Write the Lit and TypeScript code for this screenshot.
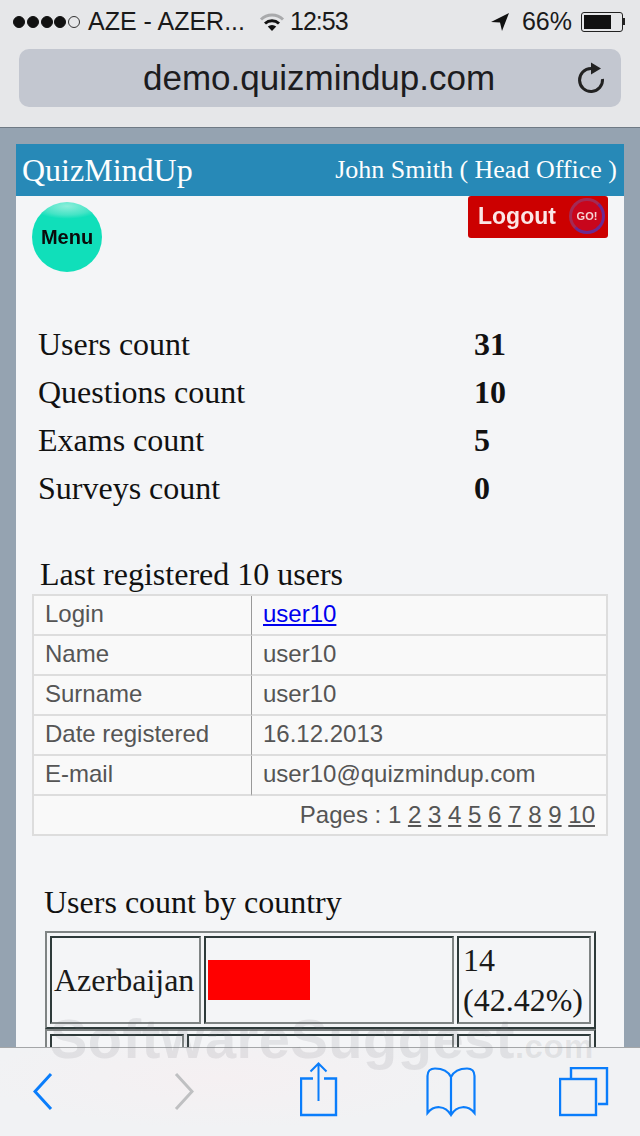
import { LitElement, html, css, svg } from 'lit';
import { customElement } from 'lit/decorators.js';

const stats = [
  ['Users count', '31'],
  ['Questions count', '10'],
  ['Exams count', '5'],
  ['Surveys count', '0'],
];

const users = [
  ['Login', 'user10'],
  ['Name', 'user10'],
  ['Surname', 'user10'],
  ['Date registered', '16.12.2013'],
  ['E-mail', 'user10@quizmindup.com'],
];

const pages = ['2', '3', '4', '5', '6', '7', '8', '9', '10'];

const wifi = svg`<svg width="26" height="20" viewBox="0 0 26 20">
  <path d="M2 7.5 A16 16 0 0 1 24 7.5" fill="none" stroke="#a9aaac" stroke-width="3"/>
  <path d="M6 11.5 A10.5 10.5 0 0 1 20 11.5" fill="none" stroke="#111" stroke-width="3"/>
  <path d="M13 19 L8.8 14.6 A6 6 0 0 1 17.2 14.6 Z" fill="#111"/>
</svg>`;

const reload = svg`<svg width="30" height="32" viewBox="0 0 30 32">
  <path d="M25.5 17 A11.5 11.5 0 1 1 14 6.5" fill="none" stroke="#222" stroke-width="3"/>
  <path d="M14 0.5 L24 6.5 L14 12.5 Z" fill="#222"/>
</svg>`;

@customElement('app-root')
export class AppRoot extends LitElement {
  static styles = css`
    :host {
      display: block;
      position: relative;
      width: 640px;
      height: 1136px;
      overflow: hidden;
      background: #95a3b1;
      font-family: 'Liberation Serif', serif;
      color: #111;
    }
    .chrome {
      height: 127px;
      background: #e6e7e9;
      border-bottom: 1px solid #6f7a85;
      font-family: 'Liberation Sans', sans-serif;
    }
    .status {
      height: 49px;
      display: flex;
      align-items: center;
      font-size: 25px;
      color: #1a1a1a;
      padding: 0 15px 6px 13px;
      box-sizing: border-box;
    }
    .dots {
      display: flex;
      gap: 1.75px;
      margin-right: 8px;
    }
    .dot {
      width: 12px;
      height: 12px;
      border-radius: 50%;
      background: #111;
      border: 1px solid #111;
      box-sizing: border-box;
    }
    .dot.off {
      background: transparent;
      border-color: #333;
    }
    .carrier {
      width: 171px;
    }
    .time {
      margin-left: 5px;
      font-weight: 500;
      letter-spacing: -1px;
    }
    .right {
      margin-left: auto;
      display: flex;
      align-items: center;
    }
    .pct {
      margin: 0 9px 0 12px;
    }
    .battery {
      width: 44px;
      height: 20px;
      display: flex;
    }
    .battery-body {
      width: 42px;
      height: 20px;
      border: 1px solid #222;
      border-radius: 3px;
      padding: 2px;
      box-sizing: border-box;
    }
    .battery-fill {
      width: 27px;
      height: 14px;
      background: #111;
    }
    .battery-tip {
      width: 2px;
      height: 7px;
      margin-top: 6px;
      background: #222;
    }
    .address {
      margin: 0 19px;
      height: 58px;
      border-radius: 10px;
      background: #c3c7d0;
      display: flex;
      align-items: center;
      font-size: 35px;
      color: #1c1c1e;
      padding-left: 124px;
      padding-right: 14px;
    }
    .address span {
      flex: 1;
    }
    .card {
      margin: 16px 16px 0;
      height: 1000px;
      background: #f4f5f7;
    }
    .head {
      height: 52px;
      background: #2789b7;
      color: #fdfefe;
      display: flex;
      align-items: center;
      justify-content: space-between;
      padding: 0 7px 0 6px;
    }
    .brand {
      font-size: 32px;
    }
    .who {
      font-size: 26px;
    }
    .actions {
      display: flex;
      justify-content: space-between;
      align-items: flex-start;
      padding: 0 16px;
    }
    .menu {
      width: 70px;
      height: 70px;
      margin-top: 6px;
      border-radius: 50%;
      background: radial-gradient(ellipse 50% 18% at 50% 6%, #8ceeda 0%, #45e4c6 70%, transparent 100%), #10dfba;
      color: #0b0b0b;
      font: bold 20px 'Liberation Sans', sans-serif;
      display: flex;
      align-items: center;
      justify-content: center;
      filter: blur(0.6px);
    }
    .logout {
      width: 140px;
      height: 42px;
      box-sizing: border-box;
      background: #cc0000;
      border-radius: 3px;
      color: #fbe6e6;
      font: bold 23px 'Liberation Sans', sans-serif;
      display: flex;
      align-items: center;
      justify-content: space-between;
      padding: 0 3px 2px 10px;
      filter: blur(0.5px);
    }
    .go {
      width: 36px;
      height: 36px;
      box-sizing: border-box;
      border-radius: 50%;
      border: 3px solid #a32a55;
      border-right-color: #6b2a90;
      border-bottom-color: #6b2a90;
      background: #c8061c;
      color: #f6d5d5;
      font-size: 11px;
      display: flex;
      align-items: center;
      justify-content: center;
    }
    .stats {
      margin: 48px 0 0 22px;
      font-size: 32px;
      display: grid;
      grid-template-columns: 436px auto;
      grid-auto-rows: 48px;
      align-items: center;
      justify-content: start;
    }
    h2 {
      margin: 0;
      font-weight: normal;
      font-size: 32px;
      line-height: 34px;
    }
    .last {
      margin: 45px 0 0 24px;
    }
    table.users {
      margin: 3px 0 0 16px;
      width: 576px;
      border-collapse: separate;
      border-spacing: 0;
      border: 2px solid #dddddd;
      table-layout: fixed;
      background: #f9f9f9;
      font: 24px 'Liberation Sans', sans-serif;
      color: #555;
    }
    .users td {
      padding: 0 0 2px 11px;
      box-sizing: border-box;
      height: 40px;
      border-bottom: 2px solid #dddddd;
    }
    .users td + td {
      border-left: 1px solid #999;
    }
    .users td:first-child {
      width: 217px;
    }
    .users tr:last-child td {
      border-bottom: 0;
      height: 38px;
    }
    .users a {
      color: #0000ee;
    }
    .users .pager {
      text-align: right;
      padding-right: 11px;
      padding-bottom: 1px;
    }
    .pager u {
      margin-left: 6.7px;
    }
    .country {
      margin: 49px 0 0 28px;
    }
    table.bars {
      width: 551px;
      table-layout: fixed;
      border-collapse: separate;
      border-spacing: 3px;
      border: 2px solid;
      border-color: #7f8484 #2e3a3a #2e3a3a #7f8484;
      font-size: 32px;
      line-height: 40px;
      margin-left: 29px;
      color: #1a1a1a;
    }
    .first {
      margin-top: 12px;
    }
    .bars td {
      border: 2px solid;
      border-color: #2e3a3a #7f8484 #7f8484 #2e3a3a;
      padding: 0 2px;
      height: 84px;
    }
    .bars .c1 {
      width: 143px;
    }
    .bars .c3 {
      width: 124px;
      padding-left: 4px;
    }
    .second .c1 {
      width: 126px;
    }
    .second td {
      height: 60px;
    }
    .fill {
      height: 40px;
      background: #ff0000;
    }
    .toolbar {
      position: absolute;
      left: 0;
      right: 0;
      bottom: 0;
      height: 89px;
      border-top: 1px solid #a4a6a8;
      background: radial-gradient(ellipse 240px 50px at 220px 30px, #f5f0f2 0%, transparent 100%), #f1f2f4;
      display: grid;
      grid-template-columns: 141px 126px 126px 133px auto;
      padding: 23px 0 0 33px;
      box-sizing: border-box;
      justify-content: start;
      align-items: start;
    }
    .toolbar svg {
      display: block;
    }
    .share {
      margin-top: -11px;
    }
    .book {
      margin-top: -4px;
    }
    .tabs {
      margin-top: -4px;
    }
    .watermark {
      position: absolute;
      left: 50px;
      top: 1006px;
      font: bold 56px 'Liberation Sans', sans-serif;
      letter-spacing: 0.5px;
      color: rgba(110, 110, 115, 0.13);
      white-space: nowrap;
    }
    .watermark small {
      font-size: 33px;
    }
  `;

  render() {
    return html`
      <div class="chrome">
        <div class="status">
          <div class="dots">
            <i class="dot"></i><i class="dot"></i><i class="dot"></i><i class="dot"></i><i class="dot off"></i>
          </div>
          <span class="carrier">AZE - AZER...</span>
          ${wifi}
          <span class="time">12:53</span>
          <div class="right">
            <svg width="20" height="20" viewBox="0 0 20 20"><path d="M19 1 L1 10 L10 10.5 L12 19 Z" fill="#111"/></svg>
            <span class="pct">66%</span>
            <div class="battery">
              <div class="battery-body"><div class="battery-fill"></div></div>
              <div class="battery-tip"></div>
            </div>
          </div>
        </div>
        <div class="address"><span>demo.quizmindup.com</span>${reload}</div>
      </div>

      <div class="card">
        <div class="head">
          <span class="brand">QuizMindUp</span>
          <span class="who">John Smith ( Head Office )</span>
        </div>
        <div class="actions">
          <div class="menu">Menu</div>
          <div class="logout">Logout<div class="go">GO!</div></div>
        </div>

        <div class="stats">
          ${stats.map(([k, v]) => html`<span>${k}</span><b>${v}</b>`)}
        </div>

        <h2 class="last">Last registered 10 users</h2>
        <table class="users">
          ${users.map(
            ([k, v], i) => html`<tr>
              <td>${k}</td>
              <td>${i === 0 ? html`<a href="#">${v}</a>` : v}</td>
            </tr>`
          )}
          <tr>
            <td class="pager" colspan="2">Pages : 1${pages.map((p) => html`<u>${p}</u>`)}</td>
          </tr>
        </table>

        <h2 class="country">Users count by country</h2>
        <table class="bars first">
          <tr>
            <td class="c1">Azerbaijan</td>
            <td><div class="fill" style="width:102px"></div></td>
            <td class="c3">14 (42.42%)</td>
          </tr>
        </table>
        <table class="bars second">
          <tr>
            <td class="c1"></td>
            <td></td>
            <td class="c3"></td>
          </tr>
        </table>
      </div>

      <div class="toolbar">
        <svg width="20" height="40" viewBox="0 0 20 40"><path d="M18 3 L2 20.5 L18 38" fill="none" stroke="#0a7dfb" stroke-width="3"/></svg>
        <svg width="20" height="40" viewBox="0 0 20 40"><path d="M2 3 L18 20.5 L2 38" fill="none" stroke="#bfc0c2" stroke-width="3"/></svg>
        <svg class="share" width="38" height="58" viewBox="0 0 38 58">
          <path d="M13 18.5 H1 V55 H36 V18.5 H24" fill="none" stroke="#0a7dfb" stroke-width="2.4"/>
          <path d="M18.5 3.5 V41 M10.5 11.5 L18.5 3.5 L26.5 11.5" fill="none" stroke="#0a7dfb" stroke-width="2"/>
        </svg>
        <svg class="book" width="50" height="50" viewBox="0 0 50 50">
          <path d="M25 10 C22 4 16 1.5 9 1.5 C4 1.5 1.5 4.5 1.5 9 V46 C8 38 19 38 25 48 C31 38 42 38 48.5 46 V9 C48.5 4.5 46 1.5 41 1.5 C34 1.5 28 4 25 10 V48" fill="none" stroke="#0a7dfb" stroke-width="2.2"/>
        </svg>
        <svg class="tabs" width="50" height="50" viewBox="0 0 50 50">
          <rect x="1" y="12" width="36" height="36" fill="none" stroke="#0a7dfb" stroke-width="2.4"/>
          <path d="M12 11 V1 H48 V37 H39" fill="none" stroke="#0a7dfb" stroke-width="2.4"/>
        </svg>
      </div>
      <div class="watermark">SoftwareSuggest<small>.com</small></div>
    `;
  }
}
